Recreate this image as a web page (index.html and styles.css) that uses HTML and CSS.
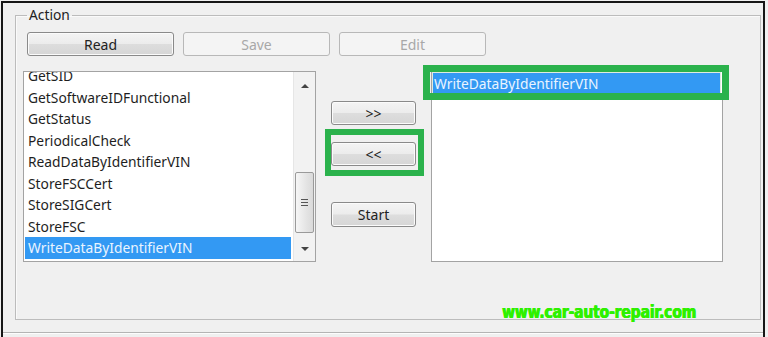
FILE: index.html
```html
<!DOCTYPE html>
<html>
<head>
<meta charset="utf-8">
<link rel="stylesheet" href="styles.css">
</head>
<body>
<div class="window">
  <fieldset class="group">
    <legend class="group-title">Action</legend>
    <div class="toolbar">
      <button class="btn btn-wide">Read</button>
      <button class="btn btn-wide" disabled>Save</button>
      <button class="btn btn-wide" disabled>Edit</button>
    </div>
    <div class="main">
      <div class="listbox listbox-left">
        <ul class="items items-scrolled">
          <li>GetSID</li>
          <li>GetSoftwareIDFunctional</li>
          <li>GetStatus</li>
          <li>PeriodicalCheck</li>
          <li>ReadDataByIdentifierVIN</li>
          <li>StoreFSCCert</li>
          <li>StoreSIGCert</li>
          <li>StoreFSC</li>
          <li class="selected">WriteDataByIdentifierVIN</li>
        </ul>
        <div class="scrollbar">
          <div class="arrow arrow-up"></div>
          <div class="track">
            <div class="thumb"><span></span><span></span><span></span></div>
          </div>
          <div class="arrow arrow-down"></div>
        </div>
      </div>
      <div class="middle">
        <button class="btn btn-mid btn-add">&gt;&gt;</button>
        <button class="btn btn-mid btn-remove highlight-box">&lt;&lt;</button>
        <button class="btn btn-mid btn-start">Start</button>
      </div>
      <div class="listbox listbox-right">
        <ul class="items items-plain">
          <li class="selected highlight-item">WriteDataByIdentifierVIN</li>
        </ul>
      </div>
    </div>
  </fieldset>
  <div class="bottom-panel"></div>
  <div class="watermark">www.car-auto-repair.com</div>
</div>
</body>
</html>
```
FILE: styles.css
```css
html, body {
  margin: 0;
  padding: 0;
  background: #f0f0f0;
}
body {
  width: 768px;
  height: 337px;
  overflow: hidden;
  font-family: "Noto Sans", "Open Sans", sans-serif;
  font-size: 13.8px;
  color: #1e1e1e;
}
.window {
  position: relative;
  box-sizing: border-box;
  margin-left: 1px;
  margin-top: 1px;
  width: 764px;
  height: 336px;
  border: 2px solid #161616;
  border-bottom: none;
  background: #f0f0f0;
  padding: 0 0 0 12px;
}
.group {
  box-sizing: border-box;
  margin: 3px 0 0 0;
  width: 746px;
  height: 314px;
  padding: 0 0 0 7px;
  border: 1px solid #bcbcbc;
  box-shadow: inset 1px 1px 0 #fafafa;
  min-inline-size: 0;
}
.group-title {
  margin-left: 4px;
  padding: 0 2px;
  font-size: 13.8px;
  line-height: 18px;
  color: #222;
}
.toolbar {
  display: flex;
  gap: 9px;
  margin: 8px 0 0 4px;
}
.btn {
  box-sizing: border-box;
  height: 24px;
  padding: 0;
  font-family: inherit;
  font-size: 14px;
  color: #222;
  border: 1px solid #8a8a8a;
  border-radius: 3px;
  background: linear-gradient(#f4f4f4 0%, #ececec 48%, #dddddd 52%, #d6d6d6 100%);
  box-shadow: inset 0 0 0 1px #fbfbfb;
}
.btn:disabled {
  color: #a8a8a8;
  border-color: #b8b8b8;
  background: #f4f4f4;
  box-shadow: none;
}
.btn-wide {
  width: 147px;
}
.main {
  display: flex;
  margin-top: 15px;
  gap: 15px;
  align-items: flex-start;
}
.listbox {
  box-sizing: border-box;
  height: 191px;
  border: 1px solid #a3a3a3;
  background: #fff;
  display: flex;
}
.listbox-left {
  width: 293px;
}
.listbox-right {
  width: 292px;
}
.items {
  list-style: none;
  margin: 0;
  padding: 0 2px 0 1px;
  flex: 1;
  overflow: hidden;
}
.items li {
  height: 21.5px;
  line-height: 21.5px;
  padding-left: 3px;
  white-space: nowrap;
}
.items-scrolled li:first-child {
  margin-top: -7px;
}
.items li.selected {
  background: #3399f3;
  color: #eaf4ff;
}
.items-plain {
  padding: 0;
  overflow: visible;
}
.items-plain li.selected {
  box-sizing: border-box;
  height: 24px;
  line-height: 22px;
  padding-left: 1px;
  margin-right: 1px;
  border: 1px solid #dfeadf;
}
.highlight-item {
  position: relative;
}
.highlight-item::after {
  content: "";
  position: absolute;
  left: -10px;
  right: -9px;
  top: -8px;
  bottom: -5px;
  border: 7px solid #2bb24c;
}
.scrollbar {
  width: 21px;
  display: flex;
  flex-direction: column;
  background: #f2f2f2;
  border-left: 1px solid #e6e6e6;
}
.arrow {
  height: 25px;
  display: flex;
  align-items: center;
  justify-content: center;
}
.arrow::before {
  content: "";
  width: 0;
  height: 0;
  border-left: 4px solid transparent;
  border-right: 4px solid transparent;
}
.arrow-up::before {
  border-bottom: 4px solid #444;
}
.arrow-down::before {
  border-top: 4px solid #444;
}
.arrow-up {
  margin-top: 1px;
}
.track {
  flex: 1;
  display: flex;
  flex-direction: column;
  justify-content: flex-end;
  padding-bottom: 3px;
}
.thumb {
  box-sizing: border-box;
  margin: 0 1px;
  height: 61px;
  border: 1px solid #9a9a9a;
  border-radius: 2px;
  background: linear-gradient(90deg, #f6f6f6, #e4e4e4 60%, #dadada);
  display: flex;
  flex-direction: column;
  align-items: center;
  justify-content: center;
  gap: 2px;
}
.thumb span {
  width: 7px;
  height: 1px;
  background: #555;
}
.middle {
  width: 85px;
  display: flex;
  flex-direction: column;
}
.btn-mid {
  width: 85px;
  font-size: 14px;
}
.btn-add {
  margin-top: 30px;
}
.btn-remove {
  margin-top: 17px;
}
.btn-start {
  margin-top: 36px;
  height: 25px;
}
.highlight-box {
  position: relative;
}
.highlight-box::after {
  content: "";
  position: absolute;
  left: -7px;
  right: -9px;
  top: -14px;
  bottom: -11px;
  border: 6px solid #2bb24c;
}
.bottom-panel {
  margin: 12px 0 0 -12px;
  height: 4px;
  border-top: 1px solid #b4b4b4;
  box-shadow: inset 0 1px 0 #fdfdfd;
}
.watermark {
  position: absolute;
  left: 499px;
  top: 301px;
  font-family: "DejaVu Sans", sans-serif;
  font-weight: bold;
  font-size: 14px;
  letter-spacing: -0.2px;
  color: #2ef000;
  text-shadow: 0.5px 0 0 #2ef000, -0.3px 0 0 #2ef000;
  transform: scaleY(1.25);
  transform-origin: 0 50%;
}
```
